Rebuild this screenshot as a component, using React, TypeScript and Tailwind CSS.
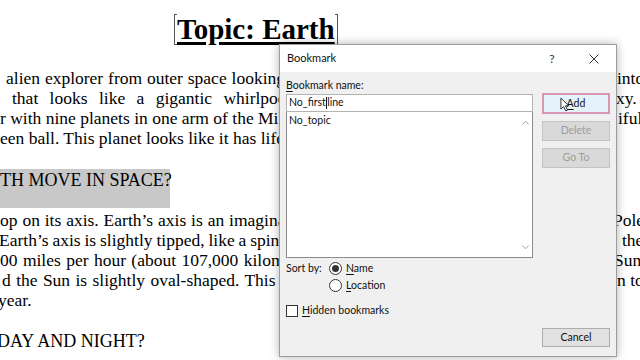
import React from "react";

// lines of the Word page; left part is clipped where the dialog starts,
// right part is the bit that peeks out past the dialog's right edge
type Line = { text: string; cls: string; rcls?: string; right?: string };

const para1: Line[] = [
  {
    text: "alien explorer from outer space looking at our galaxy",
    cls: "pl-[6px] [word-spacing:0.5px]",
    rcls: "ml-[338px]",
    right: "into",
  },
  {
    text: "that looks like a gigantic whirlpool of stars",
    cls: "pl-[12px] [word-spacing:7px]",
    rcls: "ml-[337px]",
    right: "xy.",
  },
  {
    text: "r with nine planets in one arm of the Milky Way",
    cls: "[word-spacing:0px]",
    rcls: "ml-[339px]",
    right: "iful",
  },
  { text: "een ball. This planet looks like it has life on it.", cls: "[word-spacing:0px]" },
];

const para2: Line[] = [
  {
    text: "op on its axis. Earth’s axis is an imaginary line",
    cls: "[word-spacing:0.5px]",
    rcls: "ml-[334px]",
    right: "Pole",
  },
  {
    text: "Earth’s axis is slightly tipped, like a spinning top",
    cls: "-ml-[1px] [word-spacing:-0.5px]",
    rcls: "ml-[343px]",
    right: "the",
  },
  {
    text: "00 miles per hour (about 107,000 kilometers per hour)",
    cls: "[word-spacing:1px]",
    rcls: "ml-[335px]",
    right: "Sun.",
  },
  {
    text: "d the Sun is slightly oval-shaped. This path is called",
    cls: "pl-[2px] [word-spacing:1px]",
    rcls: "ml-[338px]",
    right: "n to",
  },
  { text: "year.", cls: "-ml-[2px]" },
];

function DocLine({ line }: { line: Line }) {
  return (
    <div className="flex h-[20px] leading-[20px] whitespace-nowrap">
      <div className="w-[279px] shrink-0 overflow-hidden">
        <div className={line.cls}>{line.text}</div>
      </div>
      {line.right && <span className={`shrink-0 ${line.rcls}`}>{line.right}</span>}
    </div>
  );
}

function Chevron({ down }: { down?: boolean }) {
  return (
    <svg width="7" height="5" viewBox="0 0 7 5" className={down ? "rotate-180" : ""}>
      <path d="M0.5 4.5 L3.5 1.2 L6.5 4.5" fill="none" stroke="#a6a6a6" strokeWidth="1" />
    </svg>
  );
}

function Radio({ on }: { on?: boolean }) {
  return (
    <span className="flex h-[13px] w-[13px] items-center justify-center rounded-full border border-[#333] bg-white">
      {on && <span className="h-[7px] w-[7px] rounded-full bg-[#333]" />}
    </span>
  );
}

function Dialog() {
  return (
    <div className="absolute left-[279px] top-[44px] flex h-[313px] w-[338px] flex-col border border-[#9c9c9c] bg-[#f0f0f0] font-['Lato','Noto_Sans',sans-serif] text-[10.5px] text-[#111] shadow-[0_0_9px_rgba(0,0,0,0.3)]">
      {/* title bar */}
      <div className="flex h-[27px] items-center bg-white pl-[7px]">
        <span className="text-[11px]">Bookmark</span>
        <span className="ml-auto w-[40px] text-center text-[12px] text-[#333]">?</span>
        <span className="flex w-[44px] justify-center">
          <svg width="10" height="10" viewBox="0 0 10 10">
            <path d="M0.5 0.5 L9.5 9.5 M9.5 0.5 L0.5 9.5" stroke="#333" strokeWidth="1" />
          </svg>
        </span>
      </div>

      <div className="flex flex-1 px-[6px]">
        {/* left column */}
        <div className="flex w-[247px] flex-col pt-[5px]">
          <div className="h-[16px] leading-[16px]">
            <span className="underline underline-offset-2">B</span>ookmark name:
          </div>
          <div className="mt-[1px] flex h-[18px] items-center border border-[#b3b3b3] bg-white pl-[2px]">
            No_first
            <span className="inline-block h-[12px] w-[1.5px] bg-[#111]" />
            line
          </div>
          <div className="flex h-[146px] border border-t-0 border-[#8c8c8c] bg-white">
            <div className="flex-1 pl-[2px] pt-[1px] leading-[14px]">No_topic</div>
            <div className="flex w-[14px] flex-col items-center justify-between pb-[7px] pt-[8px]">
              <Chevron />
              <Chevron down />
            </div>
          </div>

          <div className="mt-[2px] flex h-[17px] items-center">
            <span className="w-[43px]">Sort by:</span>
            <Radio on />
            <span className="ml-[4px]">
              <span className="underline underline-offset-2">N</span>ame
            </span>
          </div>
          <div className="flex h-[17px] items-center pl-[43px]">
            <Radio />
            <span className="ml-[4px]">
              <span className="underline underline-offset-2">L</span>ocation
            </span>
          </div>
          <div className="mt-[8px] flex h-[17px] items-center">
            <span className="h-[12px] w-[12px] border border-[#333] bg-white" />
            <span className="ml-[4px]">
              <span className="underline underline-offset-2">H</span>idden bookmarks
            </span>
          </div>
        </div>

        {/* right column */}
        <div className="ml-auto flex w-[68px] flex-col pb-[9px] pt-[21px]">
          <div className="relative flex h-[21px] items-center justify-center border-2 border-[#d895b6] bg-[#e5f1fb]">
            <span>
              <span className="underline underline-offset-2">A</span>dd
            </span>
            <svg
              width="10"
              height="15"
              viewBox="0 0 11 16"
              className="absolute left-[16px] top-[2px]"
            >
              <path
                d="M1 1 L1 13 L4 10.2 L6.3 15 L8.3 14.1 L6 9.4 L9.8 9.4 Z"
                fill="white"
                stroke="#222"
                strokeWidth="1"
                strokeLinejoin="round"
              />
            </svg>
          </div>
          <div className="mt-[7px] flex h-[20px] items-center justify-center border border-[#c3c3c3] bg-[#d9d9d9] text-[#9c9c9c]">
            Delete
          </div>
          <div className="mt-[7px] flex h-[20px] items-center justify-center border border-[#c3c3c3] bg-[#d9d9d9] text-[#9c9c9c]">
            Go To
          </div>
          <div className="mt-auto flex h-[19px] items-center justify-center border border-[#adadad] bg-[#e1e1e1]">
            Cancel
          </div>
        </div>
      </div>
    </div>
  );
}

export default function App() {
  return (
    <div className="relative h-[360px] w-[640px] overflow-hidden bg-white">
      <div className="font-['Liberation_Serif','Times_New_Roman',serif] text-[17.5px] text-black">
        {/* title with bookmark brackets */}
        <div className="flex h-[68px] items-start pl-[174px] pt-[14px]">
          <span className="h-[31px] w-[3px] border-y border-l border-[#555]" />
          <span className="text-[29px] font-bold leading-[31px] underline decoration-[2.5px] underline-offset-[3px]">
            Topic: Earth
          </span>
          <span className="h-[31px] w-[3px] border-y border-r border-[#555]" />
        </div>

        {para1.map((l, i) => (
          <DocLine key={i} line={l} />
        ))}

        <div className="mt-[21px] h-[39px] w-[170px] whitespace-nowrap bg-[#c8c8c8] text-[18px] leading-[22px]">
          TH MOVE IN SPACE?
        </div>

        <div className="mt-[2px]">
          {para2.map((l, i) => (
            <DocLine key={i} line={l} />
          ))}
        </div>

        <div className="-ml-[3px] mt-[20px] whitespace-nowrap text-[18px] leading-[22px]">
          DAY AND NIGHT?
        </div>
      </div>

      <Dialog />
    </div>
  );
}
